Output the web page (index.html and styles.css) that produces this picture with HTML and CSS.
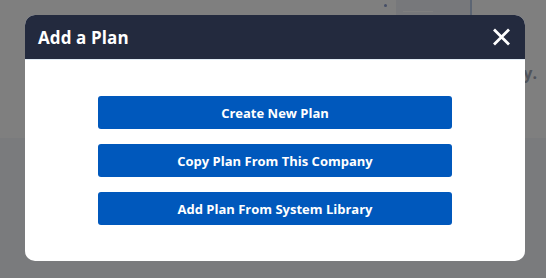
FILE: index.html
```html
<!DOCTYPE html>
<html lang="en">
<head>
<meta charset="utf-8">
<title>Add a Plan</title>
<link rel="stylesheet" href="styles.css">
</head>
<body>
<div class="page">
  <header class="page-top">
    <div class="hero-art">
      <span class="art-dot"></span>
      <span class="art-panel"><span class="art-line"></span></span>
    </div>
    <p class="page-lead">Plans help you manage benefits for your company.</p>
  </header>
  <main class="page-bottom"></main>
</div>
<div class="overlay"></div>
<div class="modal" role="dialog" aria-labelledby="modal-title">
  <div class="modal-header">
    <h2 id="modal-title" class="modal-title">Add a Plan</h2>
    <button class="modal-close" aria-label="Close">
      <svg width="19" height="18" viewBox="0 0 19 18"><path d="M2 1.5 L17 16.5 M17 1.5 L2 16.5" stroke="#fff" stroke-width="2.8" stroke-linecap="butt" fill="none"/></svg>
    </button>
  </div>
  <div class="modal-body">
    <button class="action-btn">Create New Plan</button>
    <button class="action-btn">Copy Plan From This Company</button>
    <button class="action-btn">Add Plan From System Library</button>
  </div>
</div>
</body>
</html>
```
FILE: styles.css
```css
* { box-sizing: border-box; }
html, body { margin: 0; padding: 0; }
body {
  width: 546px;
  height: 278px;
  overflow: hidden;
  font-family: "Open Sans", "Liberation Sans", sans-serif;
  position: relative;
}
.page {
  display: flex;
  flex-direction: column;
  height: 278px;
}
.page-top {
  height: 138px;
  background: #ffffff;
  position: relative;
  display: flex;
  flex-direction: column;
  align-items: flex-end;
}
.hero-art {
  display: flex;
  align-items: flex-start;
  gap: 9px;
  margin-right: 74px;
  height: 15px;
}
.art-dot {
  width: 3px;
  height: 3px;
  margin-top: 4px;
  background: #8a9ccc;
  border-radius: 50%;
}
.art-panel {
  width: 76px;
  height: 15px;
  background: #eef0f6;
  border-right: 2px solid #b9cbe6;
  display: flex;
  align-items: flex-end;
  padding: 0 0 3px 7px;
}
.art-line {
  width: 30px;
  height: 1px;
  background: #ffffff;
}
.page-lead {
  margin: 47px 9px 0 0;
  font-size: 16px;
  font-weight: 700;
  color: #a0a6b4;
  white-space: nowrap;
}
.page-bottom {
  flex: 1;
  background: #f4f6fa;
}
.overlay {
  position: absolute;
  inset: 0;
  background: rgba(0, 0, 0, 0.5);
}
.modal {
  position: absolute;
  left: 25px;
  top: 15px;
  width: 500px;
  height: 246px;
  background: #ffffff;
  border-radius: 10px;
  overflow: hidden;
  display: flex;
  flex-direction: column;
}
.modal-header {
  height: 45px;
  background: #232a3e;
  display: flex;
  align-items: center;
  justify-content: space-between;
  padding: 0 14px 0 13px;
  border-bottom: 1px solid #e3ecf5;
}
.modal-title {
  margin: 0;
  color: #ffffff;
  font-size: 17px;
  font-weight: 700;
  letter-spacing: 0.1px;
}
.modal-close {
  border: 0;
  padding: 0;
  background: none;
  width: 19px;
  height: 18px;
  display: flex;
}
.modal-body {
  flex: 1;
  display: flex;
  flex-direction: column;
  align-items: center;
  gap: 15px;
  padding-top: 36px;
}
.action-btn {
  width: 354px;
  height: 33px;
  border: 0;
  border-radius: 3px;
  background: #0058bc;
  color: #ffffff;
  font-family: "Open Sans", "Liberation Sans", sans-serif;
  font-size: 13px;
  font-weight: 700;
  padding: 0;
}
```
